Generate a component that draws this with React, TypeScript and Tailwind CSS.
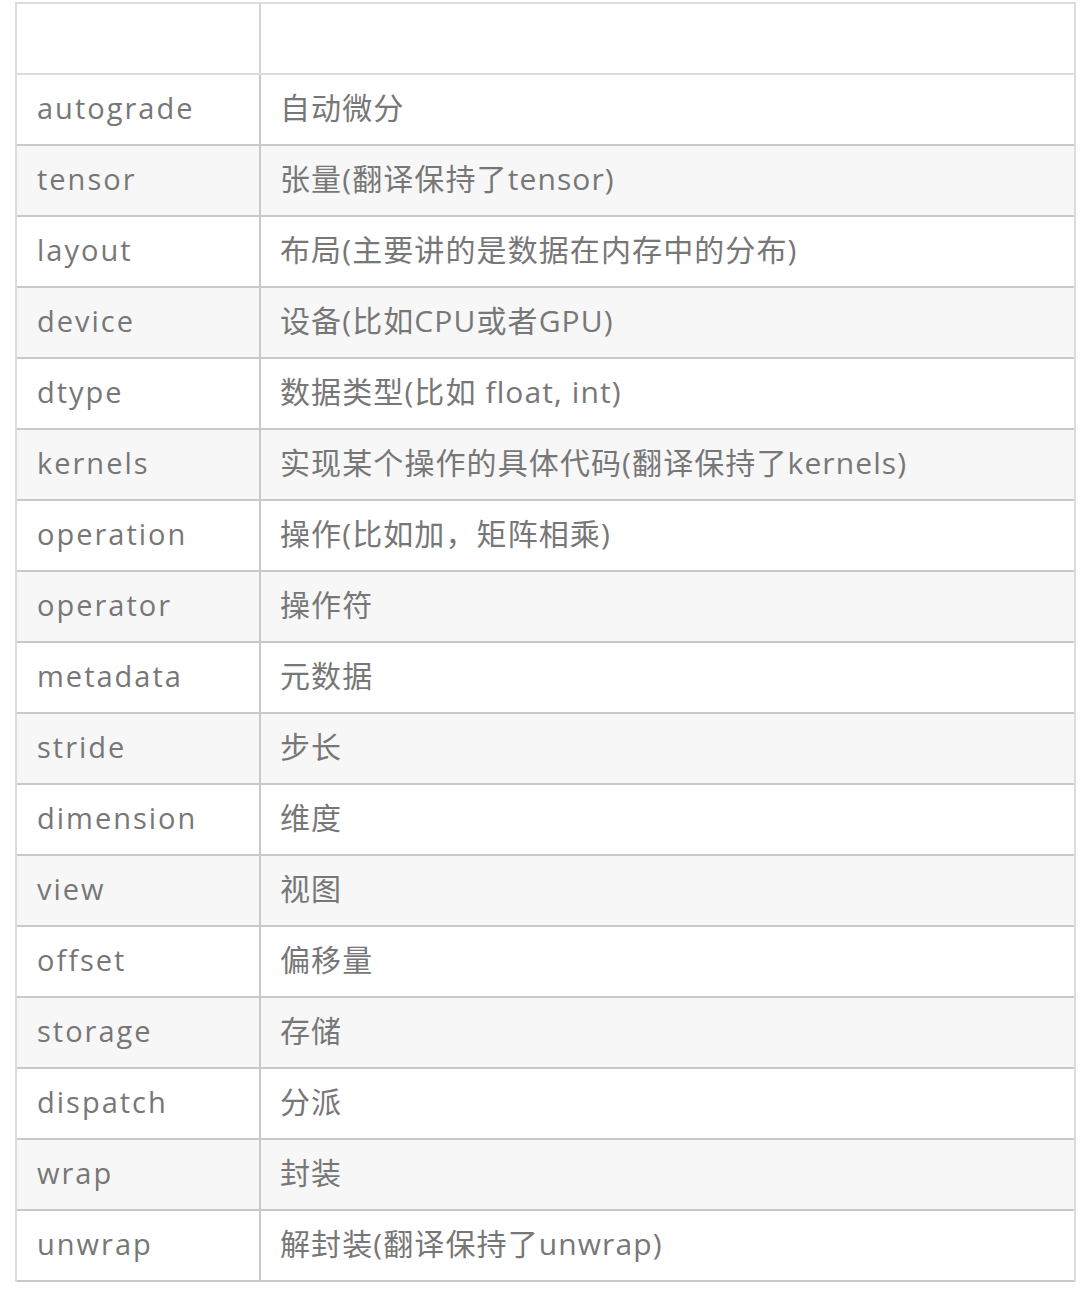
import React from 'react';

const rows: [string, string][] = [
  ['autograde', '自动微分'],
  ['tensor', '张量(翻译保持了tensor)'],
  ['layout', '布局(主要讲的是数据在内存中的分布)'],
  ['device', '设备(比如CPU或者GPU)'],
  ['dtype', '数据类型(比如 float, int)'],
  ['kernels', '实现某个操作的具体代码(翻译保持了kernels)'],
  ['operation', '操作(比如加，矩阵相乘)'],
  ['operator', '操作符'],
  ['metadata', '元数据'],
  ['stride', '步长'],
  ['dimension', '维度'],
  ['view', '视图'],
  ['offset', '偏移量'],
  ['storage', '存储'],
  ['dispatch', '分派'],
  ['wrap', '封装'],
  ['unwrap', '解封装(翻译保持了unwrap)'],
];

const font = { fontFamily: '"Open Sans", "Noto Sans CJK SC", sans-serif' };

export default function App() {
  return (
    <div className="min-h-screen bg-white pt-[2px]" style={font}>
      <div className="ml-[15px] w-[1061px] border-x-2 border-t-2 border-[#dcdcdc] text-[#777]">
        {/* empty header row */}
        <div className="flex h-[71px] border-b-2 border-[#dcdcdc] bg-white">
          <div className="w-[244px] border-r-2 border-[#d4d4d4]" />
          <div className="flex-1" />
        </div>
        {rows.map(([en, zh], i) => (
          <div
            key={en}
            className={
              'flex h-[71px] border-b-2 border-[#c9c9c9] ' +
              (i % 2 === 0 ? 'bg-white' : 'bg-[#f7f7f7]')
            }
          >
            <div className="flex w-[244px] items-center border-r-2 border-[#c9c9c9] pb-[4px] pl-[20px] text-[29px] tracking-[2px]">
              {en}
            </div>
            <div className="flex flex-1 items-center pb-[4px] pl-[19px] text-[30px] tracking-[1.1px]">
              {zh}
            </div>
          </div>
        ))}
      </div>
    </div>
  );
}
